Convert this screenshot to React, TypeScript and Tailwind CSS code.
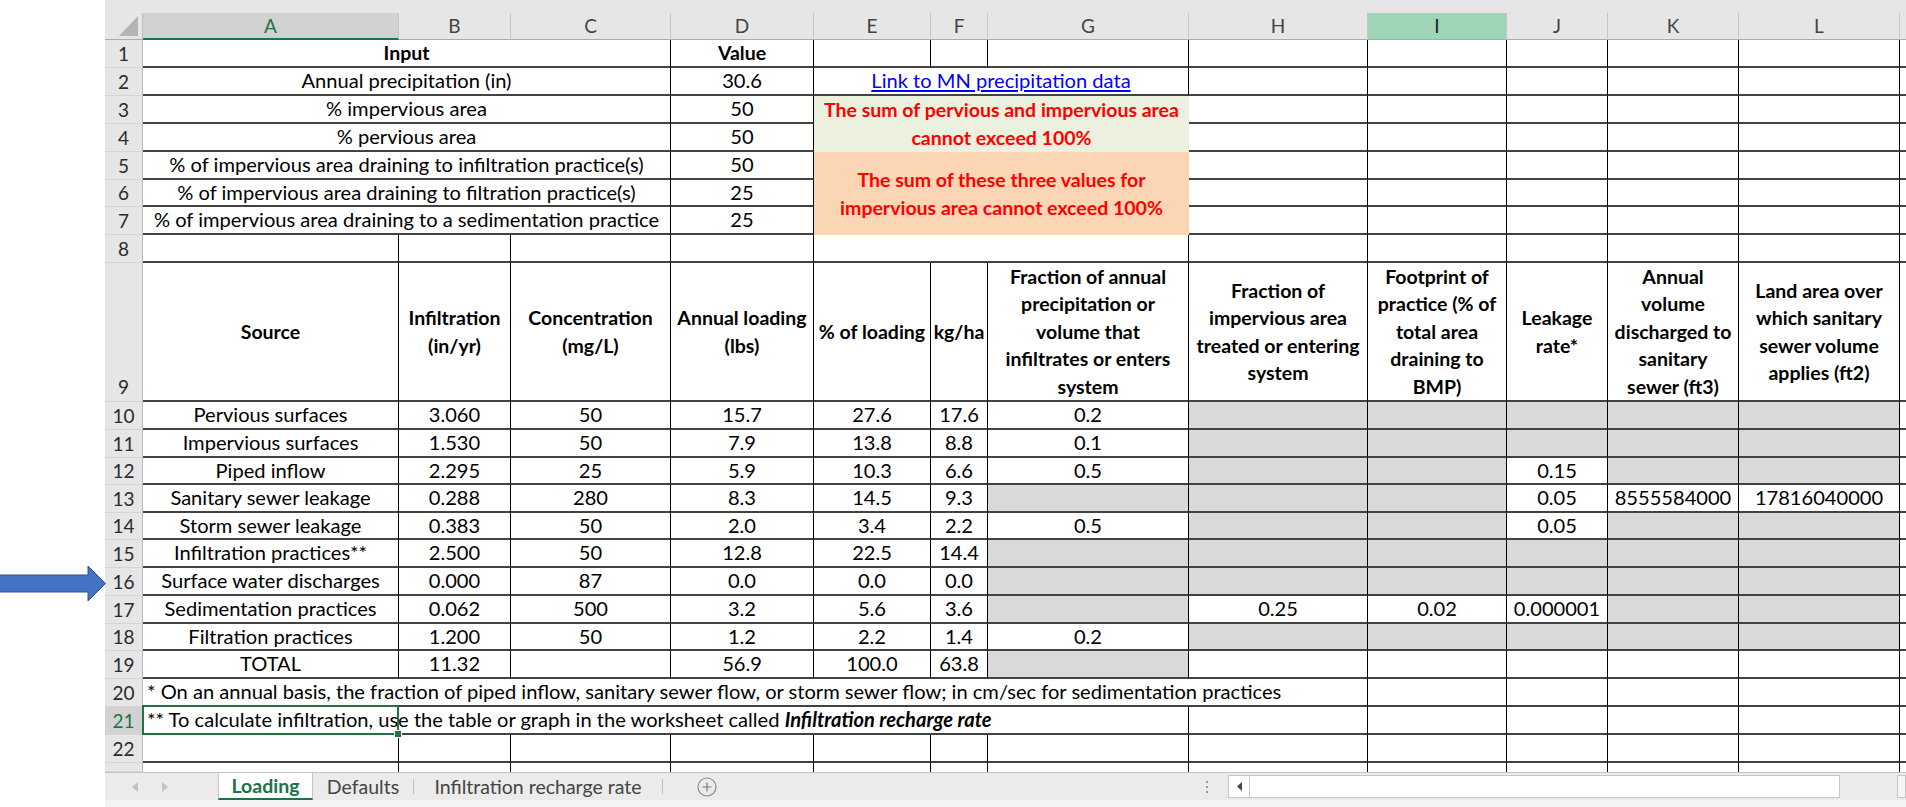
import React from "react";
import clsx from "clsx";

// Loading worksheet, drawn as an Excel-like grid.
// Columns: row header, A..L, and the sliver of column M at the right edge.
const GRID =
  "grid grid-cols-[38px_256px_112px_160px_143px_117px_57px_201px_179px_139px_101px_131px_161px_6px] grid-rows-[27px_28px_28px_28px_28px_28px_27px_28px_28px_139px_28px_28px_27px_28px_27px_28px_28px_28px_27px_28px_28px_28px_28px_9px]";

const LETTERS = ["A", "B", "C", "D", "E", "F", "G", "H", "I", "J", "K", "L"];

const INPUTS: [string, string][] = [
  ["Annual precipitation (in)", "30.6"],
  ["% impervious area", "50"],
  ["% pervious area", "50"],
  ["% of impervious area draining to infiltration practice(s)", "50"],
  ["% of impervious area draining to filtration practice(s)", "25"],
  ["% of impervious area draining to a sedimentation practice", "25"],
];

const HEAD9: string[][] = [
  ["Source"],
  ["Infiltration", "(in/yr)"],
  ["Concentration", "(mg/L)"],
  ["Annual loading", "(lbs)"],
  ["% of loading"],
  ["kg/ha"],
  ["Fraction of annual", "precipitation or", "volume that", "infiltrates or enters", "system"],
  ["Fraction of", "impervious area", "treated or entering", "system"],
  ["Footprint of", "practice (% of", "total area", "draining to", "BMP)"],
  ["Leakage", "rate*"],
  ["Annual", "volume", "discharged to", "sanitary", "sewer (ft3)"],
  ["Land area over", "which sanitary", "sewer volume", "applies (ft2)"],
];

// "#" = shaded cell, "" = empty white cell
const DATA: string[][] = [
  ["Pervious surfaces", "3.060", "50", "15.7", "27.6", "17.6", "0.2", "#", "#", "#", "#", "#"],
  ["Impervious surfaces", "1.530", "50", "7.9", "13.8", "8.8", "0.1", "#", "#", "#", "#", "#"],
  ["Piped inflow", "2.295", "25", "5.9", "10.3", "6.6", "0.5", "#", "#", "0.15", "#", "#"],
  ["Sanitary sewer leakage", "0.288", "280", "8.3", "14.5", "9.3", "#", "#", "#", "0.05", "8555584000", "17816040000"],
  ["Storm sewer leakage", "0.383", "50", "2.0", "3.4", "2.2", "0.5", "#", "#", "0.05", "#", "#"],
  ["Infiltration practices**", "2.500", "50", "12.8", "22.5", "14.4", "#", "#", "#", "#", "#", "#"],
  ["Surface water discharges", "0.000", "87", "0.0", "0.0", "0.0", "#", "#", "#", "#", "#", "#"],
  ["Sedimentation practices", "0.062", "500", "3.2", "5.6", "3.6", "#", "0.25", "0.02", "0.000001", "#", "#"],
  ["Filtration practices", "1.200", "50", "1.2", "2.2", "1.4", "0.2", "#", "#", "#", "#", "#"],
  ["TOTAL", "11.32", "", "56.9", "100.0", "63.8", "#", "", "", "", "", ""],
];

function Cell({
  children,
  className,
  noRight,
  noBottom,
}: {
  children?: React.ReactNode;
  className?: string;
  noRight?: boolean;
  noBottom?: boolean;
}) {
  return (
    <div
      className={clsx(
        "flex items-center justify-center whitespace-nowrap",
        !noRight && "border-r border-r-black",
        !noBottom && "border-b-2 border-b-[#424242]",
        className
      )}
    >
      {children}
    </div>
  );
}

function RowHead({ n, active, bottom }: { n?: string; active?: boolean; bottom?: boolean }) {
  return (
    <div
      className={clsx(
        "flex justify-center border-r border-b border-r-[#bdbdbd] border-b-[#d4d4d4] text-[19px]",
        bottom ? "items-end" : "items-center",
        active ? "bg-[#d2d2d2] text-[#217346]" : "bg-[#e6e6e6] text-[#2b2b2b]"
      )}
    >
      {n}
    </div>
  );
}

function ColHead({ label }: { label: string }) {
  const active = label === "A";
  const picked = label === "I";
  return (
    <div
      className={clsx(
        "flex items-center justify-center border-r border-r-[#c6c6c6] text-[19px]",
        active
          ? "border-b-2 border-b-[#217346] bg-[#d2d2d2] text-[#217346]"
          : picked
          ? "border-b border-b-[#ababab] bg-[#9fd5b7] text-[#222]"
          : "border-b border-b-[#ababab] bg-[#e6e6e6] text-[#444]"
      )}
    >
      {label}
    </div>
  );
}

// empty H..L cells plus the M sliver
function tail(prefix: string) {
  return [
    ...[0, 1, 2, 3, 4].map((i) => <Cell key={`${prefix}-${i}`} />),
    <Cell key={`${prefix}-m`} noRight />,
  ];
}

function BlueArrow() {
  return (
    <svg className="absolute left-0 top-[565px]" width="107" height="38" viewBox="0 0 107 38">
      <path d="M-2 10 H88 V1 L105.5 18.5 L88 36 V27 H-2 Z" fill="#4472c4" stroke="#2f528f" strokeWidth="1" />
    </svg>
  );
}

function TabBar() {
  return (
    <div className="flex flex-col">
      <div className="flex h-[28px] items-stretch border-t border-t-[#c6c6c6] bg-[#ebebeb] text-[19.5px] leading-none">
        <div className="flex w-[113px] items-center gap-[24px] pl-[27px]">
          <svg width="6" height="10" viewBox="0 0 6 10">
            <path d="M6 0 L0 5 L6 10 Z" fill="#c3c3c3" />
          </svg>
          <svg width="6" height="10" viewBox="0 0 6 10">
            <path d="M0 0 L6 5 L0 10 Z" fill="#c3c3c3" />
          </svg>
        </div>
        <div className="flex w-[95px] items-center justify-center border-x border-b-2 border-x-[#c6c6c6] border-b-[#217346] bg-white font-bold text-[#217346]">
          Loading
        </div>
        <div className="flex w-[100px] items-center justify-center text-[#444]">Defaults</div>
        <div className="my-[6px] w-px bg-[#bdbdbd]" />
        <div className="flex w-[248px] items-center justify-center text-[#444]">Infiltration recharge rate</div>
        <div className="my-[6px] w-px bg-[#bdbdbd]" />
        <div className="flex w-[88px] items-center justify-center">
          <svg width="20" height="20" viewBox="0 0 20 20">
            <circle cx="10" cy="10" r="9" fill="none" stroke="#8c8c8c" strokeWidth="1.2" />
            <path d="M10 5.5 V14.5 M5.5 10 H14.5" stroke="#7a7a7a" strokeWidth="1.2" />
          </svg>
        </div>
        <div className="w-[449px]" />
        <div className="flex w-[14px] flex-col items-center justify-center gap-[3px]">
          <span className="h-[2px] w-[2px] bg-[#9a9a9a]" />
          <span className="h-[2px] w-[2px] bg-[#9a9a9a]" />
          <span className="h-[2px] w-[2px] bg-[#9a9a9a]" />
        </div>
        <div className="w-[14px]" />
        <div className="my-[2px] flex w-[22px] items-center justify-center border border-[#c6c6c6] bg-white">
          <svg width="5" height="9" viewBox="0 0 5 9">
            <path d="M5 0 L0 4.5 L5 9 Z" fill="#444" />
          </svg>
        </div>
        <div className="my-[2px] w-[590px] border-y border-r border-[#c6c6c6] bg-white" />
        <div className="w-[57px]" />
        <div className="my-[2px] flex-1 border border-[#c6c6c6] bg-[#f4f4f4]" />
      </div>
      <div className="h-[7px] bg-[#f3f3f3]" />
    </div>
  );
}

export default function App() {
  return (
    <div className="flex h-[807px] w-[1906px] overflow-hidden bg-white font-['Lato',sans-serif] text-[20.1px] leading-[27.7px] text-black">
      <div className="relative w-[105px] shrink-0">
        <BlueArrow />
      </div>

      <div className="flex w-[1801px] flex-col">
        <div className="h-[13px] bg-[#e6e6e6]" />

        <div className={GRID}>
          {/* column headers */}
          <div className="relative border-r border-b border-r-[#bdbdbd] border-b-[#ababab] bg-[#e6e6e6]">
            <svg className="absolute bottom-[3px] right-[4px]" width="19" height="20" viewBox="0 0 19 20">
              <path d="M19 0 V20 H0 Z" fill="#b4b4b4" />
            </svg>
          </div>
          {LETTERS.map((l) => (
            <ColHead key={l} label={l} />
          ))}
          <div className="border-b border-b-[#ababab] bg-[#e6e6e6]" />

          {/* row 1 */}
          <RowHead n="1" />
          <Cell className="col-span-3 text-[19.5px] font-bold">Input</Cell>
          <Cell className="text-[19.5px] font-bold">Value</Cell>
          <Cell />
          <Cell />
          <Cell />
          {tail("r1")}

          {/* rows 2-7 */}
          {INPUTS.map(([label, value], i) => (
            <React.Fragment key={label}>
              <RowHead n={String(i + 2)} />
              <Cell className="col-span-3">{label}</Cell>
              <Cell>{value}</Cell>
              {i === 0 && (
                <Cell className="col-span-3">
                  <span className="text-[#0000ff] underline underline-offset-2">Link to MN precipitation data</span>
                </Cell>
              )}
              {i === 1 && (
                <Cell
                  noRight
                  noBottom
                  className="col-span-3 row-span-2 flex-col bg-[#ebf1de] text-[19.5px] font-bold text-[#ff0000]"
                >
                  <span>The sum of pervious and impervious area</span>
                  <span>cannot exceed 100%</span>
                </Cell>
              )}
              {i === 3 && (
                <Cell
                  noRight
                  noBottom
                  className="col-span-3 row-span-3 flex-col bg-[#fcd5b4] text-[19.5px] font-bold text-[#ff0000]"
                >
                  <span>The sum of these three values for</span>
                  <span>impervious area cannot exceed 100%</span>
                </Cell>
              )}
              {tail(`r${i + 2}`)}
            </React.Fragment>
          ))}

          {/* row 8 */}
          <RowHead n="8" />
          <Cell />
          <Cell />
          <Cell />
          <Cell />
          <Cell className="col-span-3" />
          {tail("r8")}

          {/* row 9: table headings */}
          <RowHead n="9" bottom />
          {HEAD9.map((lines, i) => (
            <Cell key={i} className="flex-col text-[19.5px] font-bold leading-[27.4px]">
              {lines.map((l) => (
                <span key={l}>{l}</span>
              ))}
            </Cell>
          ))}
          <Cell noRight />

          {/* rows 10-19 */}
          {DATA.map((row, i) => (
            <React.Fragment key={row[0]}>
              <RowHead n={String(10 + i)} />
              {row.map((v, j) => (
                <Cell key={j} className={v === "#" ? "bg-[#d9d9d9]" : undefined}>
                  {v === "#" ? null : v}
                </Cell>
              ))}
              <Cell noRight />
            </React.Fragment>
          ))}

          {/* row 20: footnote */}
          <RowHead n="20" />
          <Cell className="col-span-8 justify-start pl-[4px]">
            * On an annual basis, the fraction of piped inflow, sanitary sewer flow, or storm sewer flow; in cm/sec for
            sedimentation practices
          </Cell>
          <Cell />
          <Cell />
          <Cell />
          <Cell />
          <Cell noRight />

          {/* row 21: footnote with the selected cell */}
          <RowHead n="21" active />
          <Cell className="relative col-span-7 justify-start pl-[4px]">
            <span>
              ** To calculate infiltration, use the table or graph in the worksheet called{" "}
              <b className="italic">Infiltration recharge rate</b>
            </span>
            <div className="pointer-events-none absolute left-[-1px] top-[-2px] h-[30px] w-[257px] border-2 border-[#217346]">
              <div className="absolute bottom-[-5px] right-[-5px] h-[8px] w-[8px] border border-white bg-[#217346]" />
            </div>
          </Cell>
          {tail("r21")}

          {/* row 22 */}
          <RowHead n="22" />
          {LETTERS.map((l) => (
            <Cell key={`r22-${l}`} />
          ))}
          <Cell noRight />

          {/* row 23, cut off by the sheet tabs */}
          <RowHead />
          {LETTERS.map((l) => (
            <Cell key={`r23-${l}`} noBottom />
          ))}
          <Cell noRight noBottom />
        </div>

        <TabBar />
      </div>
    </div>
  );
}
